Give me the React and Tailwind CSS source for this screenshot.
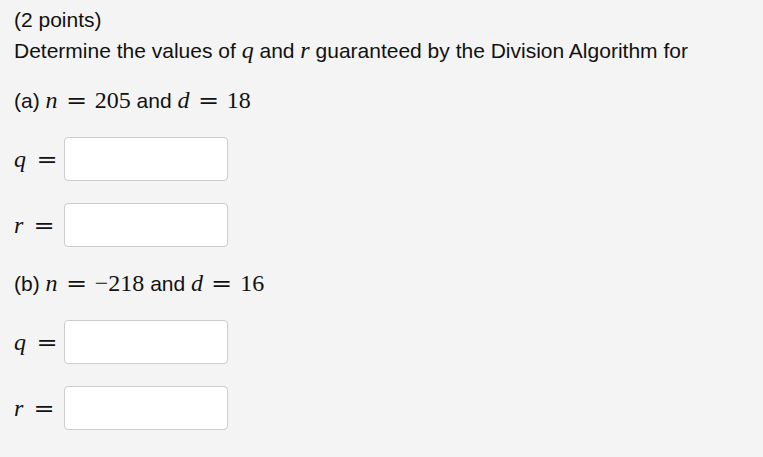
function V({ children }) {
  return <span className="font-[family-name:'Liberation_Serif',serif] italic text-[24px]">{children}</span>;
}

function N({ children }) {
  return <span className="font-[family-name:'Liberation_Serif',serif] text-[24px]">{children}</span>;
}

function Eq({ pad = 'px-[9px]' }) {
  return (
    <span className={`inline-block font-[family-name:'DejaVu_Serif',serif] text-[23px] leading-none scale-x-[1.1] ${pad}`}>
      =
    </span>
  );
}

function AnswerRow({ name }) {
  return (
    <div className="flex items-center h-[44px] mt-[22px]">
      <div className="w-[50px] flex items-center leading-none">
        <V>{name}</V>
        <Eq pad="pl-[11px]" />
      </div>
      <input
        type="text"
        className="w-[164px] h-[44px] bg-white border border-[#cccccc] rounded-[4px] outline-none px-2"
      />
    </div>
  );
}

export default function App() {
  return (
    <div className="min-h-screen w-full bg-[#f4f4f4] text-[#111111] font-[family-name:'Liberation_Sans',Arial,sans-serif] text-[21px] pl-[14px] pt-[5px]">
      <div className="h-[30px] leading-[30px]">(2 points)</div>
      <div className="h-[30px] leading-[30px] whitespace-nowrap">
        Determine the values of <V>q</V> and <V>r</V> guaranteed by the Division Algorithm for
      </div>

      <div className="h-[30px] leading-[30px] mt-[20px] whitespace-nowrap">
        (a) <V>n</V><Eq /><N>205</N> and <V>d</V><Eq /><N>18</N>
      </div>
      <AnswerRow name="q" />
      <AnswerRow name="r" />

      <div className="h-[30px] leading-[30px] mt-[21px] whitespace-nowrap">
        (b) <V>n</V><Eq /><N>−218</N> and <V>d</V><Eq /><N>16</N>
      </div>
      <AnswerRow name="q" />
      <AnswerRow name="r" />
    </div>
  );
}
